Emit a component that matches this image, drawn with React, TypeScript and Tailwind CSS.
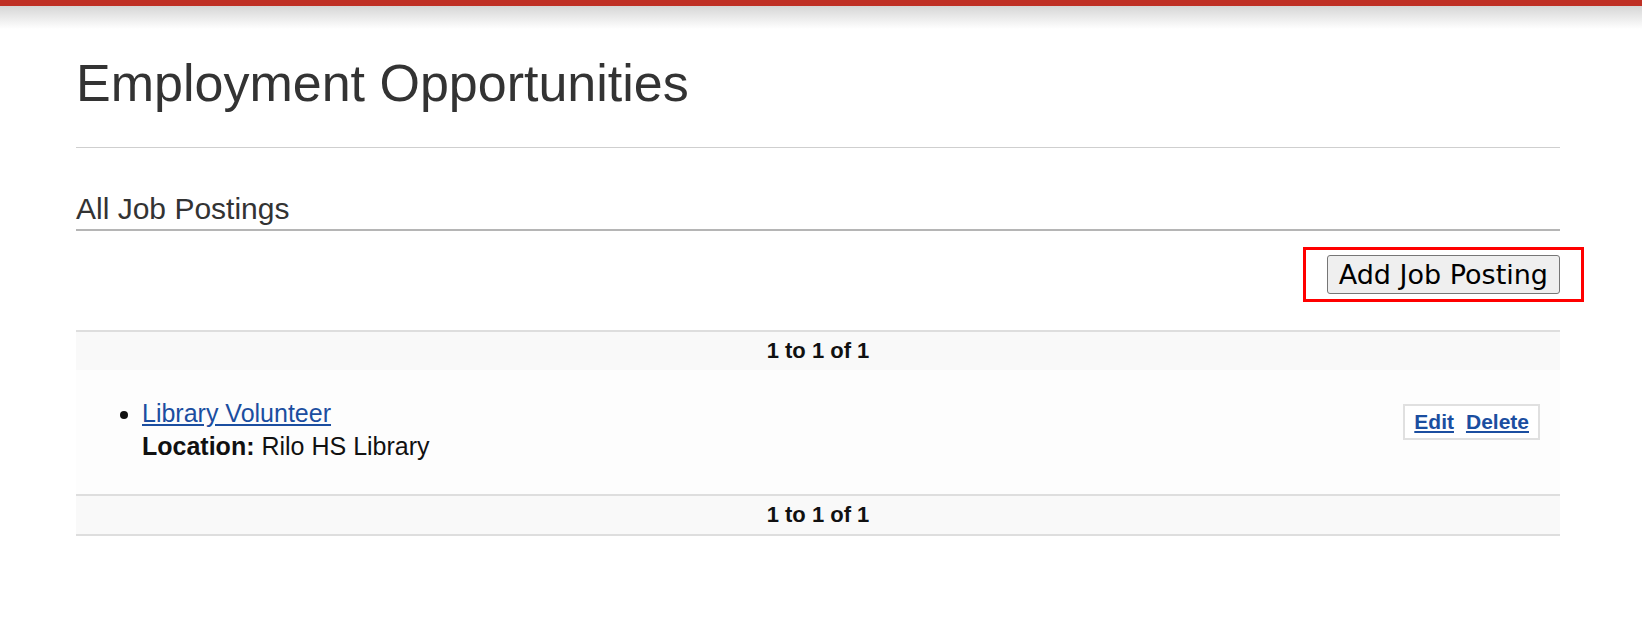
const pagerText = "1 to 1 of 1";

const Pager = ({ last }: { last?: boolean }) => (
  <div
    className={
      "border-t-2 border-[#dedede] bg-[#f9f9f9] py-[6px] text-center text-[22px] leading-[26px] font-bold text-[#111]" +
      (last ? " border-b-2" : "")
    }
  >
    {pagerText}
  </div>
);

const App = () => {
  return (
    <div className="min-h-screen bg-white font-['Liberation_Sans',Arial,sans-serif] text-[#111]">
      {/* top bar */}
      <div className="h-[6px] bg-[#bf3025]" />
      <div className="h-[23px] bg-linear-to-b from-[#d6d6d6] to-white" />

      <div className="ml-[76px] w-[1484px]">
        <h1 className="mt-[24px] text-[52px] leading-[60px] font-normal text-[#333]">
          Employment Opportunities
        </h1>
        <hr className="mt-[34px] border-0 border-t border-[#cfcfcf]" />

        <h2 className="mt-[44px] border-b-2 border-[#b5b5b5] pb-[3px] text-[30px] leading-[34px] text-[#333]">
          All Job Postings
        </h2>

        <div className="mt-[24px] flex justify-end">
          <div className="relative">
            <span className="pointer-events-none absolute -inset-x-[24px] -inset-y-[8px] border-[3px] border-[#ff0000]" />
            <button className="h-[39px] rounded-[3px] border border-[#767676] bg-[#efefef] px-[11px] font-['DejaVu_Sans',Verdana,sans-serif] text-[27px] leading-[32px] text-black">
              Add Job Posting
            </button>
          </div>
        </div>

        <div className="mt-[36px]">
          <Pager />
          <div className="flex items-start justify-between bg-[#fdfdfd] pt-[27px] pb-[31px]">
            <ul className="ml-[66px] list-disc text-[25px] leading-[33px]">
              <li>
                <a href="#" className="text-[#1b4ea0] underline">
                  Library Volunteer
                </a>
                <br />
                <span className="font-bold">Location:</span> Rilo HS Library
              </li>
            </ul>
            <div className="mt-[7px] mr-[20px] flex gap-[12px] border-2 border-[#e0e0e0] bg-white px-[9px] py-[4px] text-[21px] leading-[24px] font-bold">
              <a href="#" className="text-[#1b4ea0] underline">
                Edit
              </a>
              <a href="#" className="text-[#1b4ea0] underline">
                Delete
              </a>
            </div>
          </div>
          <Pager last />
        </div>
      </div>
    </div>
  );
};

export default App;
